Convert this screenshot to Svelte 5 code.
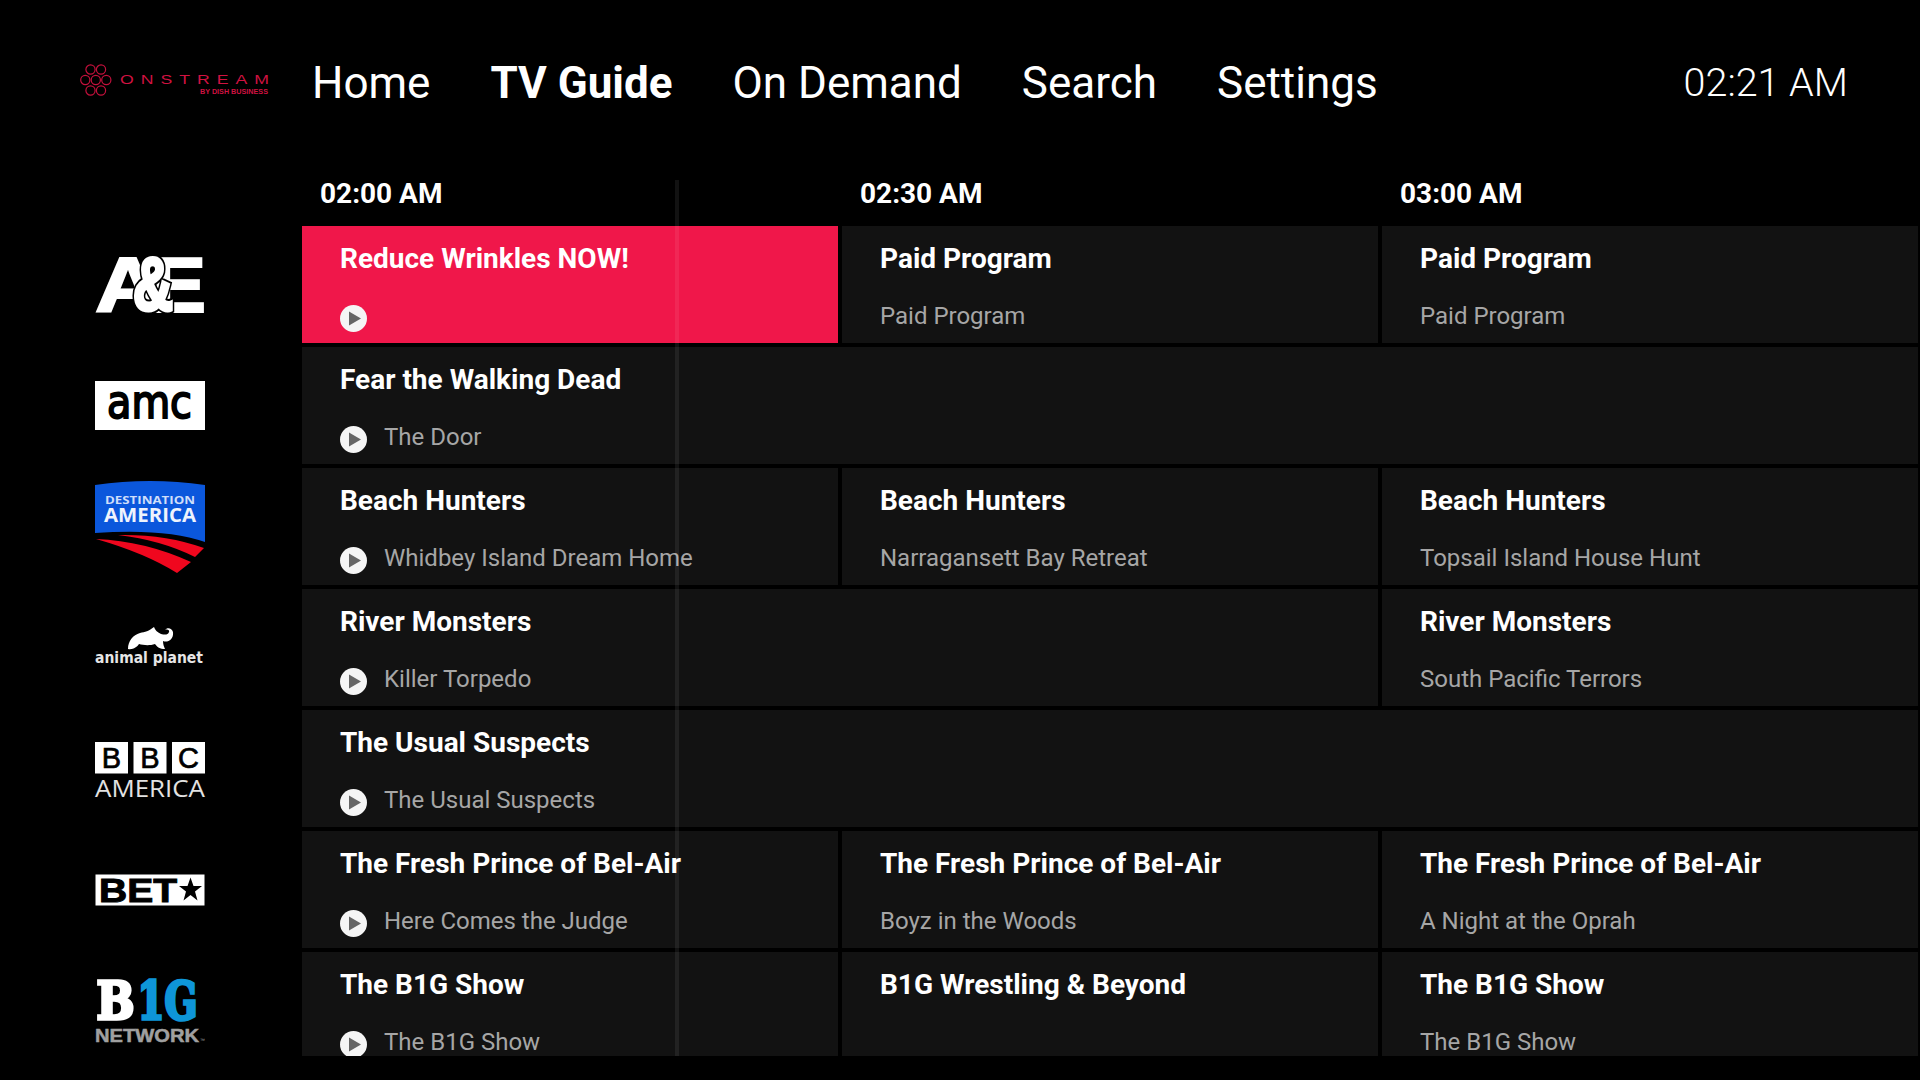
<script lang="ts">
  const nav = ["Home", "TV Guide", "On Demand", "Search", "Settings"];
  const times = ["02:00 AM", "02:30 AM", "03:00 AM"];

  type Cell = { title: string; sub?: string; span?: number; play?: boolean; active?: boolean };

  const rows: Cell[][] = [
    [
      { title: "Reduce Wrinkles NOW!", play: true, active: true },
      { title: "Paid Program", sub: "Paid Program" },
      { title: "Paid Program", sub: "Paid Program" }
    ],
    [{ title: "Fear the Walking Dead", sub: "The Door", play: true, span: 3 }],
    [
      { title: "Beach Hunters", sub: "Whidbey Island Dream Home", play: true },
      { title: "Beach Hunters", sub: "Narragansett Bay Retreat" },
      { title: "Beach Hunters", sub: "Topsail Island House Hunt" }
    ],
    [
      { title: "River Monsters", sub: "Killer Torpedo", play: true, span: 2 },
      { title: "River Monsters", sub: "South Pacific Terrors" }
    ],
    [{ title: "The Usual Suspects", sub: "The Usual Suspects", play: true, span: 3 }],
    [
      { title: "The Fresh Prince of Bel-Air", sub: "Here Comes the Judge", play: true },
      { title: "The Fresh Prince of Bel-Air", sub: "Boyz in the Woods" },
      { title: "The Fresh Prince of Bel-Air", sub: "A Night at the Oprah" }
    ],
    [
      { title: "The B1G Show", sub: "The B1G Show", play: true },
      { title: "B1G Wrestling & Beyond" },
      { title: "The B1G Show", sub: "The B1G Show" }
    ]
  ];

  // flower mark of the onstream logo
  const rings = [
    [10.5, 3.5], [21, 3.5],
    [5.3, 14], [15.8, 14], [26.3, 14],
    [10.5, 24.5], [21, 24.5]
  ];
</script>

<div class="screen">
  <header class="top">
    <div class="brand">
      <svg class="brand-mark" width="194" height="34" viewBox="0 0 194 34">
        {#each rings as r}
          <circle cx={r[0]} cy={r[1]} r="4.6" fill="none" stroke="#c4103c" stroke-width="1.2" />
        {/each}
        <text class="brand-name" x="40" y="18" textLength="156" lengthAdjust="spacingAndGlyphs">ONSTREAM</text>
        <text class="brand-by" x="120" y="28" textLength="68" lengthAdjust="spacingAndGlyphs">BY DISH BUSINESS</text>
      </svg>
    </div>
    <nav class="nav">
      {#each nav as item}
        <span class="nav-item" class:current={item === "TV Guide"}>{item}</span>
      {/each}
    </nav>
    <div class="clock">02:21 AM</div>
  </header>

  <div class="body">
    <div class="channels">
      <!-- A&E -->
      <svg class="logo" viewBox="0 0 110 117">
        <text class="l-heavy" x="0" y="86" font-size="78" textLength="66" lengthAdjust="spacingAndGlyphs" fill="#fff" stroke="#fff" stroke-width="2">A</text>
        <text class="l-heavy" x="57" y="86" font-size="78" textLength="54" lengthAdjust="spacingAndGlyphs" fill="#fff" stroke="#fff" stroke-width="2">E</text>
        <text class="l-heavy amp-back" x="38" y="84" font-size="74" textLength="40" lengthAdjust="spacingAndGlyphs">&amp;</text>
        <text class="l-heavy amp" x="38" y="84" font-size="74" textLength="40" lengthAdjust="spacingAndGlyphs">&amp;</text>
      </svg>
      <!-- AMC -->
      <svg class="logo" viewBox="0 0 110 117">
        <rect x="0" y="34" width="110" height="49" fill="#fff" />
        <text class="l-dejavu" x="12" y="71" font-size="46" textLength="85" lengthAdjust="spacingAndGlyphs" fill="#000" stroke="#000" stroke-width="2">amc</text>
      </svg>
      <!-- Destination America -->
      <svg class="logo" viewBox="0 0 110 117">
        <path d="M0 17Q55 9 110 17V74Q70 60 0 65Z" fill="#0b57dc" />
        <text class="l-open" x="10" y="36" font-size="11" font-weight="700" textLength="90" lengthAdjust="spacingAndGlyphs" fill="#cfdefa">DESTINATION</text>
        <text class="l-open" x="9" y="54" font-size="20" font-weight="700" textLength="92" lengthAdjust="spacingAndGlyphs" fill="#eef3fd">AMERICA</text>
        <path d="M1 71Q50 73 96 94L82 105Q50 85 1 71Z" fill="#f0071e" />
        <path d="M23 67Q70 66 109 80L100 89Q66 72 23 67Z" fill="#f0071e" />
      </svg>
      <!-- Animal Planet -->
      <svg class="logo" viewBox="0 0 110 117">
        <path d="M33 60C33 52 38 46 45 44C50 43 54 42 59 38C60 41 62 43 66 45C70 46 73 46 74 43C75 41 72 40 70 41C72 38 77 39 78 43C79 51 72 54 68 52C68 55 69 58 70 60C65 60 62 58 60 55C54 57 48 56 44 55C42 58 38 61 33 60Z" fill="#fff" />
        <text class="l-round" x="0" y="74" font-size="15" textLength="108" lengthAdjust="spacingAndGlyphs" fill="#e6e6e6">animal planet</text>
      </svg>
      <!-- BBC America -->
      <svg class="logo" viewBox="0 0 110 117">
        {#each [["B", 0], ["B", 38.5], ["C", 77]] as box}
          <rect x={box[1]} y="32" width="33" height="31.5" fill="#fff" />
          <text class="l-sans" x={+box[1] + 16.5} y="58" font-size="29" text-anchor="middle" fill="#000" stroke="#000" stroke-width="0.7">{box[0]}</text>
        {/each}
        <text class="l-open" x="0" y="87" font-size="23" font-weight="400" textLength="110" lengthAdjust="spacingAndGlyphs" fill="#e2e2e2">AMERICA</text>
      </svg>
      <!-- BET -->
      <svg class="logo" viewBox="0 0 110 117">
        <rect x="0.5" y="43.5" width="109" height="31" fill="#fff" />
        <text class="l-heavy" x="4" y="71" font-size="34" textLength="78" lengthAdjust="spacingAndGlyphs" fill="#000" stroke="#000" stroke-width="1">BET</text>
        <path d="M95.500 46.500L98.500 55H107L100 60.500L102.500 69.500L95.500 64L88.500 69.500L91 60.500L84 55H92.500Z" fill="#000" />
      </svg>
      <!-- B1G Network -->
      <svg class="logo" viewBox="0 0 110 117">
        <text class="l-slab" x="1.5" y="67" font-size="52" textLength="38" lengthAdjust="spacingAndGlyphs" fill="#fff" stroke="#fff" stroke-width="3.500">B</text>
        <text class="l-slab" x="42.5" y="67" font-size="52" textLength="60" lengthAdjust="spacingAndGlyphs" fill="#0e95d8" stroke="#0e95d8" stroke-width="3.500">1G</text>
        <text class="l-heavy" x="0" y="90" font-size="19" textLength="104" lengthAdjust="spacingAndGlyphs" fill="#a0a0a0" stroke="#a0a0a0" stroke-width="0.5">NETWORK</text>
        <text class="l-sans" x="105" y="90" font-size="5" fill="#a0a0a0">™</text>
      </svg>
    </div>

    <div class="guide">
      <div class="times">
        {#each times as t}
          <span class="time">{t}</span>
        {/each}
      </div>
      <div class="grid">
        {#each rows as row}
          {#each row as cell}
            <div class="cell" class:active={cell.active} style={cell.span ? `grid-column: span ${cell.span}` : ""}>
              <div class="title">{cell.title}</div>
              <div class="meta">
                {#if cell.play}
                  <svg class="play" width="27" height="27" viewBox="0 0 27 27">
                    <circle cx="13.500" cy="13.500" r="13.500" fill="#f5f5f5" />
                    <path d="M9 6.500L21 13.500L9 20.500Z" fill="#666" />
                  </svg>
                {/if}
                {#if cell.sub}
                  <span class="sub">{cell.sub}</span>
                {/if}
              </div>
            </div>
          {/each}
        {/each}
      </div>
      <div class="now"></div>
    </div>
  </div>
</div>

<style>
  :global(body) {
    background: #000;
  }

  .screen {
    width: 1920px;
    height: 1080px;
    overflow: hidden;
    background: #000;
    color: #fff;
    font-family: Roboto, sans-serif;
  }

  .top {
    display: flex;
    align-items: center;
    height: 166px;
    margin-bottom: -2px;
    padding: 0 72px 0 80px;
    box-sizing: border-box;
  }

  .brand {
    display: flex;
    width: 232px;
  }

  .brand-mark {
    overflow: visible;
  }

  .brand-name {
    font-family: "Liberation Sans", sans-serif;
    font-size: 12px;
    letter-spacing: 4.75px;
    fill: #d01240;
  }

  .brand-by {
    font-family: "Liberation Sans", sans-serif;
    font-size: 8px;
    font-weight: 700;
    fill: #d01240;
  }

  .nav {
    display: flex;
    gap: 60px;
    flex: 1;
    font-size: 44px;
  }

  .nav-item.current {
    font-weight: 700;
  }

  .clock {
    margin-bottom: 2px;
    font-size: 39.5px;
    font-weight: 300;
  }

  .body {
    display: flex;
  }

  .channels {
    display: flex;
    flex-direction: column;
    gap: 4px;
    width: 302px;
    padding: 62px 0 0 95px;
    box-sizing: border-box;
    flex: none;
  }

  .logo {
    display: block;
    width: 110px;
    height: 117px;
    flex: none;
    overflow: visible;
  }

  .l-heavy {
    font-family: "Liberation Sans", sans-serif;
    font-weight: 700;
  }

  .amp {
    fill: #fff;
    stroke: #fff;
    stroke-width: 4px;
  }

  .amp-back {
    fill: #000;
    stroke: #000;
    stroke-width: 8px;
  }

  .l-sans {
    font-family: "Liberation Sans", sans-serif;
  }

  .l-dejavu {
    font-family: "DejaVu Sans", sans-serif;
  }

  .l-open {
    font-family: "Open Sans", sans-serif;
  }

  .l-round {
    font-family: "DejaVu Sans", sans-serif;
    font-weight: 700;
  }

  .l-slab {
    font-family: "DejaVu Serif", serif;
    font-weight: 700;
  }

  .guide {
    position: relative;
    flex: 1;
    height: 892px;
    overflow: hidden;
  }

  .times {
    display: grid;
    grid-template-columns: repeat(3, 536px);
    gap: 4px;
    align-items: center;
    height: 58px;
    padding-bottom: 4px;
  }

  .time {
    padding-left: 18px;
    font-size: 28px;
    font-weight: 700;
  }

  .grid {
    display: grid;
    grid-template-columns: repeat(3, 536px);
    grid-auto-rows: 117px;
    gap: 4px;
    height: 830px;
    overflow: hidden;
  }

  .cell {
    padding: 0 0 0 38px;
    background: #121212;
    min-width: 0;
  }

  .cell.active {
    background: #f0174a;
  }

  .title {
    margin-top: 17px;
    height: 32px;
    line-height: 32px;
    font-size: 28px;
    font-weight: 700;
    white-space: nowrap;
  }

  .meta {
    display: flex;
    align-items: center;
    gap: 17px;
    margin-top: 26px;
    height: 30px;
  }

  .play {
    flex: none;
    margin-top: 4px;
  }

  .sub {
    color: #a6a6a6;
    font-size: 24px;
    white-space: nowrap;
  }

  .now {
    position: absolute;
    left: 373px;
    top: 16px;
    bottom: 0;
    width: 4px;
    background: rgba(255, 255, 255, 0.07);
  }
</style>
